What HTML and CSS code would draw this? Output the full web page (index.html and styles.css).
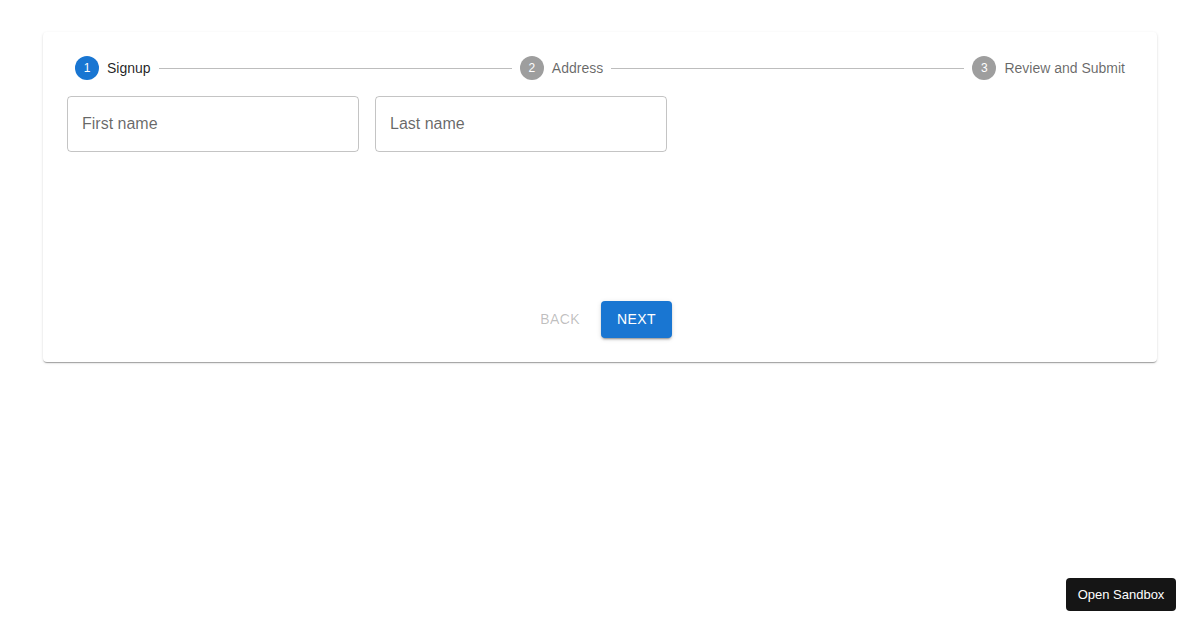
FILE: index.html
```html
<!DOCTYPE html>
<html>
<head>
<meta charset="utf-8">
<link rel="stylesheet" href="styles.css">
</head>
<body>
<div class="page">
  <div class="card">
    <div class="stepper">
      <div class="step">
        <span class="circle active">1</span>
        <span class="label active">Signup</span>
      </div>
      <div class="connector"></div>
      <div class="step">
        <span class="circle">2</span>
        <span class="label">Address</span>
      </div>
      <div class="connector"></div>
      <div class="step">
        <span class="circle">3</span>
        <span class="label">Review and Submit</span>
      </div>
    </div>
    <div class="fields">
      <div class="field">First name</div>
      <div class="field">Last name</div>
    </div>
    <div class="actions">
      <button class="btn back">Back</button>
      <button class="btn next">Next</button>
    </div>
  </div>
</div>
<button class="sandbox">Open Sandbox</button>
</body>
</html>
```
FILE: styles.css
```css
* { box-sizing: border-box; }
html, body { margin: 0; padding: 0; background: #fff; }
body { font-family: "Liberation Sans", Arial, sans-serif; }
.page { padding: 32px 43px; }
.card {
  background: #fff;
  border-radius: 4px;
  box-shadow: 0 2px 1px -1px rgba(0,0,0,0.2), 0 1px 1px 0 rgba(0,0,0,0.14), 0 1px 3px 0 rgba(0,0,0,0.12);
  padding: 24px;
}
.stepper { display: flex; align-items: center; }
.step { display: flex; align-items: center; padding: 0 8px; }
.circle {
  width: 24px; height: 24px; border-radius: 50%;
  background: #9e9e9e; color: #fff;
  font-size: 12px; display: flex; align-items: center; justify-content: center;
  margin-right: 8px;
}
.circle.active { background: #1976d2; }
.label { font-size: 14px; color: rgba(0,0,0,0.6); line-height: 20px; }
.label.active { color: rgba(0,0,0,0.87); }
.connector { flex: 1; border-top: 1px solid #bdbdbd; }
.fields { display: flex; gap: 16px; margin-top: 16px; }
.field {
  width: 292px; height: 56px;
  border: 1px solid rgba(0,0,0,0.23); border-radius: 4px;
  padding: 0 14px; display: flex; align-items: center;
  font-size: 16px; color: rgba(0,0,0,0.6);
}
.actions { display: flex; justify-content: center; margin-top: 149px; padding-left: 4px; }
.btn {
  font-family: "Liberation Sans", Arial, sans-serif;
  font-size: 14px; font-weight: 400; text-transform: uppercase;
  letter-spacing: 0.02857em; line-height: 24.5px;
  border: none; border-radius: 4px; padding: 6px 16px;
  background: transparent;
}
.back { color: rgba(0,0,0,0.26); padding: 6px 8px; margin-right: 13px; }
.next {
  background: #1976d2; color: #fff;
  box-shadow: 0 3px 1px -2px rgba(0,0,0,0.2), 0 2px 2px 0 rgba(0,0,0,0.14), 0 1px 5px 0 rgba(0,0,0,0.12);
}
.sandbox {
  position: fixed; right: 24px; bottom: 19px;
  width: 110px; height: 33px;
  background: #151515; color: #fff; border: none; border-radius: 4px;
  font-family: "Liberation Sans", Arial, sans-serif; font-size: 13px;
}
```
